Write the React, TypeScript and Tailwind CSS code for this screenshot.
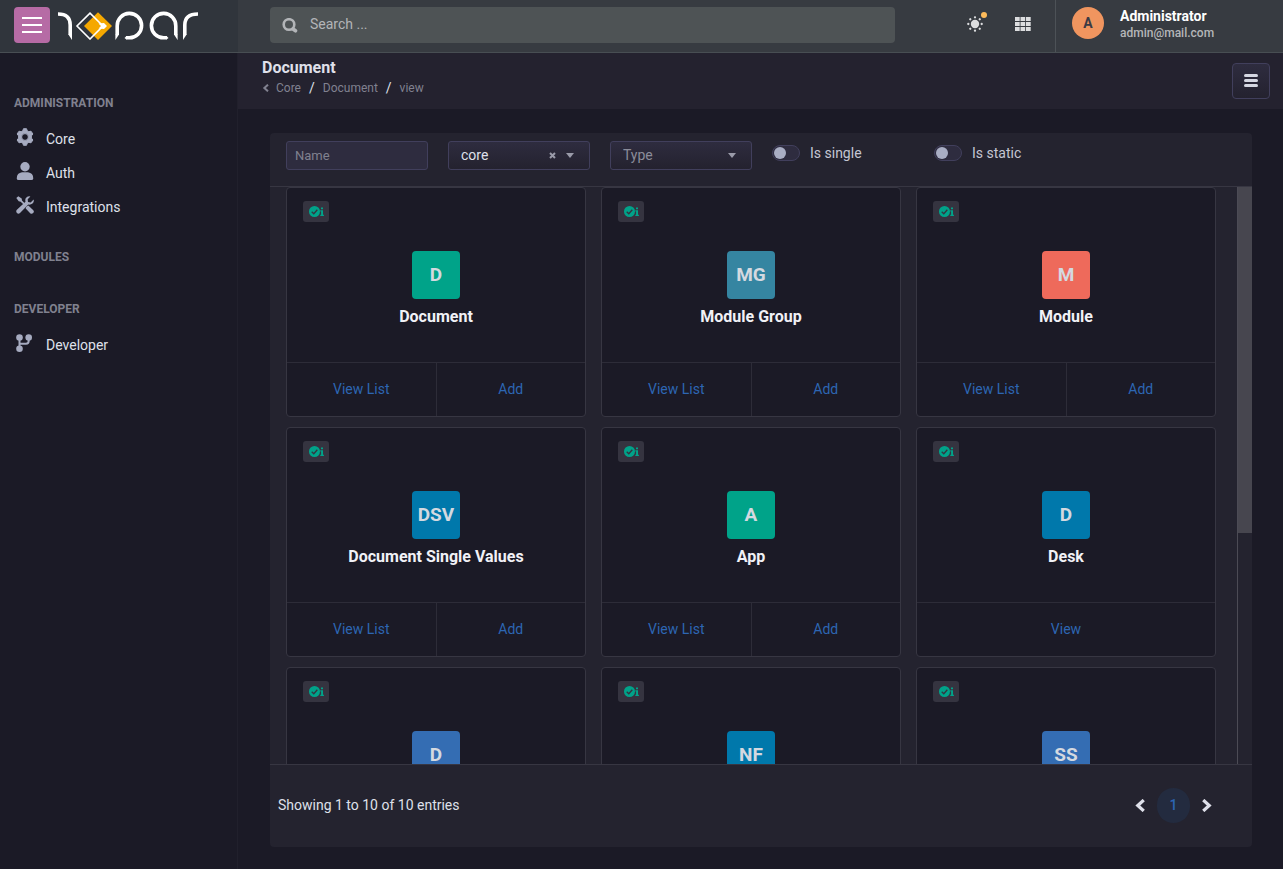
import React from "react";

type Tile = {
  initials: string;
  color: string;
  name?: string;
  actions: string[];
};

const tiles: Tile[] = [
  { initials: "D", color: "bg-[#00a389]", name: "Document", actions: ["View List", "Add"] },
  { initials: "MG", color: "bg-[#3585a1]", name: "Module Group", actions: ["View List", "Add"] },
  { initials: "M", color: "bg-[#ee6a5b]", name: "Module", actions: ["View List", "Add"] },
  { initials: "DSV", color: "bg-[#0078ab]", name: "Document Single Values", actions: ["View List", "Add"] },
  { initials: "A", color: "bg-[#00a389]", name: "App", actions: ["View List", "Add"] },
  { initials: "D", color: "bg-[#0078ab]", name: "Desk", actions: ["View"] },
  { initials: "D", color: "bg-[#346db3]", actions: [] },
  { initials: "NF", color: "bg-[#0078ab]", actions: [] },
  { initials: "SS", color: "bg-[#346db3]", actions: [] },
];

function Logo() {
  return (
    <svg width="140" height="30" viewBox="0 0 140 30" aria-label="Zopar" role="img">
      <g fill="none" stroke="#fff" strokeWidth="3.6">
        <path d="M0 4Q12.200 4 12.200 15V25" />
        <path d="M59.200 25V16A12.200 12.200 0 1 1 71.400 27.800H68" />
        <path d="M117.800 25V16A12.200 12.200 0 1 0 105.600 27.800H109" />
        <path d="M140 4Q126.800 4 126.800 15V25" />
      </g>
      <g fill="#fff">
        <path d="M10.400 24.500H14V30Z" />
        <path d="M57.400 24.500H61L57.400 30Z" />
        <path d="M119.600 24.500H116L119.600 30Z" />
        <path d="M125 24.500H128.600L125 30Z" />
        <path d="M68.500 26 66.500 28 68.500 29.600Z" />
        <path d="M108.500 26 110.500 28 108.500 29.600Z" />
      </g>
      <path d="M26 16 40 2.200 54 16 40 30Z" fill="#f5a800" />
      <path d="M45 16 32 3.200 19 16 32 29Z" fill="none" stroke="#fff" strokeWidth="1.600" />
      <path d="M40.500 13.500 46 13 49 16 46 19 40.500 18.500 43 16Z" fill="#fff" />
    </svg>
  );
}

function GearIcon() {
  return (
    <svg width="18" height="18" viewBox="0 0 18 18" fill="currentColor" aria-hidden="true">
      <path
        fillRule="evenodd"
        stroke="currentColor"
        strokeLinejoin="round"
        d="M7.500.7H10.500L11.200 2.700 12.900 3.700 15 3.200 16.900 6 15.400 7.900V10.100L16.900 12 15 14.800 12.900 14.300 11.200 15.300 10.500 17.300H7.500L6.800 15.300 5.100 14.300 3 14.800 1.100 12 2.600 10.100V7.900L1.100 6 3 3.200 5.100 3.700 6.800 2.700ZM9 5.600A3.400 3.400 0 1 0 9 12.400 3.400 3.400 0 1 0 9 5.600Z"
      />
    </svg>
  );
}

function UserIcon() {
  return (
    <svg width="18" height="18" viewBox="0 0 18 18" fill="currentColor" aria-hidden="true">
      <circle cx="9" cy="4.700" r="4.700" />
      <path d="M6 10.200H12Q17.200 11 17.200 16V16.500Q17.200 18 15.500 18H2.500Q.8 18 .8 16.500V16Q.8 11 6 10.200Z" />
    </svg>
  );
}

function ToolsIcon() {
  return (
    <svg width="18" height="18" viewBox="0 0 18 18" fill="currentColor" aria-hidden="true">
      <path d="M.3 2 2.300.2 5.700 2.500 6 4.500 9 7.500 7.800 8.800 4.700 5.700 2.700 5.300Z" />
      <path d="M10.200 10.800 12.300 9.500 17.300 14.200Q18.500 15.500 17.200 17 15.700 18.400 14.200 17.200L9.700 12.500Z" />
      <path d="M17.600 3.600 14.700 6.400 12 6 11.700 3.300 14.400.4Q11.500-.4 9.700 2.200 9 3.800 9.500 5.700L.9 13.800Q-.5 15.300.9 16.900 2.400 18.300 4 17L12.300 8.500Q14.600 9 16.500 7.500 18.400 5.800 17.600 3.600Z" />
    </svg>
  );
}

function BranchIcon() {
  return (
    <svg width="18" height="18" viewBox="0 0 18 18" fill="currentColor" aria-hidden="true">
      <circle cx="3.500" cy="3.500" r="3.300" />
      <circle cx="12.700" cy="3.500" r="3.300" />
      <circle cx="3.500" cy="14.700" r="3.300" />
      <path d="M3.500 3.500V14.500M12.700 4V7Q12.700 9.700 10 9.700H3.500" fill="none" stroke="currentColor" strokeWidth="2" />
    </svg>
  );
}

function SunIcon() {
  const angles = [0, 45, 90, 135, 180, 225, 270, 315];
  return (
    <svg width="16" height="16" viewBox="0 0 16 16" fill="currentColor" aria-hidden="true">
      <circle cx="8" cy="8" r="4.200" />
      {angles.map((a) => (
        <circle key={a} cx="8" cy="1.300" r="1.150" transform={`rotate(${a} 8 8)`} />
      ))}
    </svg>
  );
}

function GridIcon() {
  return (
    <svg width="16" height="14" viewBox="0 0 16 14" fill="currentColor" aria-hidden="true">
      {[0, 5, 10].map((y) =>
        [0, 5.5, 11].map((x) => <rect key={`${x}-${y}`} x={x} y={y} width="4.700" height="4" />)
      )}
    </svg>
  );
}

function StatusIcon() {
  return (
    <svg width="15" height="11" viewBox="0 0 15 11" aria-hidden="true">
      <circle cx="5.500" cy="5.500" r="5.500" fill="currentColor" />
      <path d="M2.700 5.700 4.800 7.700 8.300 3.700" fill="none" stroke="#353440" strokeWidth="1.300" />
      <path d="M12 1.500H14V3.300H12ZM11.300 4.300H14V8.700H14.900V10H11.300V8.700H12.100V5.600H11.300Z" fill="currentColor" />
    </svg>
  );
}

function Chevron({ flip = false, size }: { flip?: boolean; size: number }) {
  return (
    <svg width={size} height={size} viewBox="0 0 12 12" aria-hidden="true">
      <path
        d={flip ? "M3 1 8.500 6 3 11" : "M9 1 3.500 6 9 11"}
        fill="none"
        stroke="currentColor"
        strokeWidth="3"
      />
    </svg>
  );
}

function Caret() {
  return (
    <svg width="8" height="5" viewBox="0 0 8 5" fill="currentColor" aria-hidden="true">
      <path d="M0 0H8L4 5Z" />
    </svg>
  );
}

function MenuGroup({ title, children }: { title: string; children?: React.ReactNode }) {
  return (
    <section>
      <h2 className="text-xs leading-4 font-bold text-[#80818f] uppercase">{title}</h2>
      {children && <ul className="mt-[11px]">{children}</ul>}
    </section>
  );
}

function MenuItem({ icon, label }: { icon: React.ReactNode; label: string }) {
  return (
    <li>
      <a href="#" className="flex h-[34px] items-center gap-3 pl-0.5 text-sm text-[#dfe0ea]">
        <span className="pb-1 text-[#a6abc0]">{icon}</span>
        {label}
      </a>
    </li>
  );
}

const selectStyle =
  "h-[29px] w-full appearance-none rounded-[3px] border border-[#413f5c] bg-linear-to-b from-[#2e2c3f] to-[#24222f] pr-10 pb-0.5 pl-3 text-sm outline-none";

function Toggle({ id, label }: { id: string; label: string }) {
  return (
    <div className="flex h-6 items-center gap-[10px]">
      <input
        id={id}
        type="checkbox"
        className="flex h-4 w-7 shrink-0 appearance-none items-center rounded-full border border-[#413f5c] bg-[#2e2c3f] px-px before:h-3 before:w-3 before:rounded-full before:bg-[#a9aec4] before:content-[''] checked:justify-end"
      />
      <label htmlFor={id} className="text-sm text-[#c5c6d3]">
        {label}
      </label>
    </div>
  );
}

function DocumentTile({ tile }: { tile: Tile }) {
  return (
    <article className="flex h-[230px] flex-col rounded border border-[#373642] bg-[#1b1a26]">
      <div className="flex flex-1 flex-col px-4 pt-[13px]">
        <span className="flex h-[21px] w-[26px] items-center justify-center rounded-[3px] bg-[#353440] pb-px text-[#00a389]">
          <StatusIcon />
        </span>
        <div className="mt-[29px] flex flex-col items-center">
          <div
            className={`flex h-12 w-12 items-center justify-center rounded text-[19px] font-bold text-[#d4d9e0] ${tile.color}`}
          >
            {tile.initials}
          </div>
          {tile.name && <h3 className="mt-1 text-base leading-7 font-bold text-[#f1f1f6]">{tile.name}</h3>}
        </div>
      </div>
      <div className="flex h-[54px] divide-x divide-[#2d2c38] border-t border-[#2d2c38]">
        {tile.actions.map((action) => (
          <a key={action} href="#" className="flex flex-1 items-center justify-center pb-0.5 text-sm text-[#2d66b3]">
            {action}
          </a>
        ))}
      </div>
    </article>
  );
}

export default function App() {
  return (
    <div className="flex h-screen flex-col bg-[#1b1a26] font-[Roboto,'Noto_Sans',sans-serif] text-[#dfe0ea]">
      <header className="flex h-[53px] shrink-0 border-b border-[#484e53] bg-[#373b41]">
        <div className="flex w-[238px] shrink-0 items-start gap-2 bg-[#30353c] pt-[7px] pl-[14px]">
          <button
            type="button"
            aria-label="Toggle sidebar"
            className="flex h-9 w-9 flex-col items-center justify-center gap-[5px] rounded bg-[#b66ba5]"
          >
            <span className="h-0.5 w-5 bg-white" />
            <span className="h-0.5 w-5 bg-white" />
            <span className="h-0.5 w-5 bg-white" />
          </button>
          <a href="#" className="pt-[3px]">
            <Logo />
          </a>
        </div>
        <div className="flex flex-1 items-start pt-[7px] pl-8">
          <label className="flex h-9 w-[625px] items-center gap-3 rounded bg-[#4e5355] pr-3 pl-3 text-[#b3b5b8]">
            <svg width="16" height="15" viewBox="0 0 16 15" aria-hidden="true">
              <circle cx="7" cy="6.500" r="5.300" fill="none" stroke="currentColor" strokeWidth="2.600" />
              <path d="M11 11 13.500 12.800" stroke="currentColor" strokeWidth="3.600" strokeLinecap="round" />
            </svg>
            <input
              type="search"
              aria-label="Search"
              placeholder="Search ..."
              className="min-w-0 flex-1 bg-transparent pb-0.5 text-sm outline-none placeholder:text-[#b3b5b8]"
            />
          </label>
        </div>
        <div className="flex items-center gap-8 pr-6 pb-1 text-[#dcdddf]">
          <button type="button" aria-label="Theme" className="relative">
            <SunIcon />
            <span className="absolute -top-1 -right-1 h-1.5 w-1.5 rounded-full bg-[#fdbb5b]" />
          </button>
          <button type="button" aria-label="Applications">
            <GridIcon />
          </button>
        </div>
        <a href="#" className="flex w-[228px] shrink-0 items-start gap-4 border-l border-[#4d5257] pt-[7px] pl-4">
          <span className="flex h-8 w-8 items-center justify-center rounded-full bg-[#f0955f] text-sm font-bold text-[#3b3a44]">
            A
          </span>
          <span className="flex flex-col">
            <strong className="text-sm leading-[18px] font-bold text-white">Administrator</strong>
            <span className="text-xs leading-4 font-medium text-[#b4b6b8]">admin@mail.com</span>
          </span>
        </a>
      </header>

      <div className="flex min-h-0 flex-1">
        <nav className="w-[238px] shrink-0 border-r border-[#21202c] pt-[42px] pl-[14px]">
          <MenuGroup title="Administration">
            <MenuItem icon={<GearIcon />} label="Core" />
            <MenuItem icon={<UserIcon />} label="Auth" />
            <MenuItem icon={<ToolsIcon />} label="Integrations" />
          </MenuGroup>
          <div className="h-[25px]" />
          <MenuGroup title="Modules" />
          <div className="h-9" />
          <MenuGroup title="Developer">
            <MenuItem icon={<BranchIcon />} label="Developer" />
          </MenuGroup>
        </nav>

        <main className="flex min-w-0 flex-1 flex-col">
          <div className="flex h-14 shrink-0 items-start justify-between bg-[#24222f] pr-[13px] pl-6">
            <div className="pt-[5px]">
              <h1 className="text-base leading-5 font-bold">Document</h1>
              <div className="mt-px flex items-center text-xs leading-[18px] text-[#80818f]">
                <a href="#" className="flex items-center gap-1.5">
                  <Chevron size={8} />
                  Core
                </a>
                <span className="px-2 text-sm leading-[18px] text-[#dfe0ea]">/</span>
                <a href="#">Document</a>
                <span className="px-2 text-sm leading-[18px] text-[#dfe0ea]">/</span>
                <span>view</span>
              </div>
            </div>
            <button
              type="button"
              aria-label="Page menu"
              className="mt-[10px] flex h-9 w-[38px] flex-col items-center justify-center gap-0.5 rounded border border-[#413f5c] bg-linear-to-b from-[#2e2c3f] to-[#24222f] pb-0.5"
            >
              <span className="h-[3px] w-[14px] rounded-full bg-[#d5d7e2]" />
              <span className="h-[3px] w-[14px] rounded-full bg-[#d5d7e2]" />
              <span className="h-[3px] w-[14px] rounded-full bg-[#d5d7e2]" />
            </button>
          </div>

          <section className="mt-6 mr-[31px] mb-[22px] ml-8 flex min-h-0 flex-1 flex-col rounded bg-[#24232f]">
            <form className="grid h-[54px] shrink-0 grid-cols-6 items-start gap-5 border-b border-[#373642] pt-2 pr-[14px] pl-4">
              <input
                type="text"
                aria-label="Name"
                placeholder="Name"
                className="h-[29px] w-full rounded-[3px] border border-[#413f5c] bg-[#2e2c3f] px-2 text-[13px] outline-none placeholder:text-[#80818f]"
              />
              <div className="relative">
                <select aria-label="Module" defaultValue="core" className={`${selectStyle} text-[#dfe0ea]`}>
                  <option value="core">core</option>
                </select>
                <div className="absolute inset-y-0 right-4 flex items-center gap-[10px] text-[#9a9ba9]">
                  <button type="button" aria-label="Clear module">
                    <svg width="7" height="7" viewBox="0 0 7 7" aria-hidden="true">
                      <path d="M1 1 6 6M6 1 1 6" stroke="currentColor" strokeWidth="2" />
                    </svg>
                  </button>
                  <Caret />
                </div>
              </div>
              <div className="relative">
                <select aria-label="Type" defaultValue="" className={`${selectStyle} text-[#8b8c9a]`}>
                  <option value="">Type</option>
                </select>
                <div className="pointer-events-none absolute inset-y-0 right-4 flex items-center text-[#9a9ba9]">
                  <Caret />
                </div>
              </div>
              <Toggle id="is-single" label="Is single" />
              <Toggle id="is-static" label="Is static" />
            </form>

            <div className="flex min-h-0 flex-1">
              <div className="grid min-w-0 flex-1 auto-rows-max grid-cols-3 gap-x-[15px] gap-y-[10px] overflow-y-auto pr-[21px] pl-4 [scrollbar-width:none]">
                {tiles.map((tile, i) => (
                  <DocumentTile key={i} tile={tile} />
                ))}
              </div>
              <div className="w-[15px] border-l border-[#4c4b55]" aria-hidden="true">
                <div className="h-3/5 bg-[#47464f]" />
              </div>
            </div>

            <footer className="flex h-[83px] shrink-0 items-center justify-between border-t border-[#373642] pr-[39px] pb-0.5 pl-2">
              <p className="text-sm">Showing 1 to 10 of 10 entries</p>
              <div className="flex items-center gap-[10px]">
                <button type="button" aria-label="Previous page">
                  <Chevron size={13} />
                </button>
                <button
                  type="button"
                  className="flex h-[35px] w-[33px] items-center justify-center rounded-full bg-[#232b3f] text-sm font-medium text-[#2d66b3]"
                >
                  1
                </button>
                <button type="button" aria-label="Next page">
                  <Chevron flip size={13} />
                </button>
              </div>
            </footer>
          </section>
        </main>
      </div>
    </div>
  );
}
